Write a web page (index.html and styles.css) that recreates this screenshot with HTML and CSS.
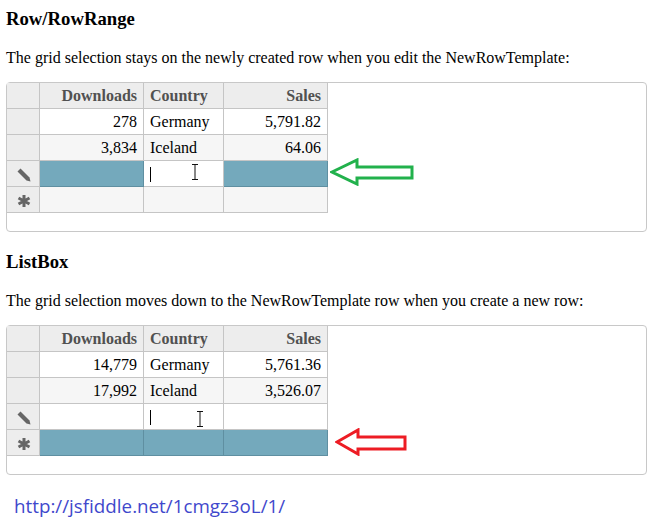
FILE: index.html
```html
<!DOCTYPE html>
<html lang="en">
<head>
  <title>NewRowTemplate selection</title>
  <meta charset="UTF-8">
  <link rel="stylesheet" href="styles.css">
</head>
<body>
  <h3>Row/RowRange</h3>
  <p>The grid selection stays on the newly created row when you edit the NewRowTemplate:</p>
  <div class="grid-box">
    <table class="grid">
      <thead>
        <tr><th class="row-head"></th><th class="num">Downloads</th><th>Country</th><th class="num">Sales</th></tr>
      </thead>
      <tbody>
        <tr><td class="row-head"></td><td class="num">278</td><td>Germany</td><td class="num">5,791.82</td></tr>
        <tr class="alt"><td class="row-head"></td><td class="num">3,834</td><td>Iceland</td><td class="num">64.06</td></tr>
        <tr class="selected">
          <td class="row-head">
            <svg class="glyph" viewBox="0 0 14 14"><path d="M0.5 3.5 L3.5 0.5 L12.5 9.5 L13.5 13.5 L9.5 12.5 Z" fill="#666"/></svg>
          </td>
          <td></td>
          <td class="editing"><span class="caret"></span></td>
          <td></td>
        </tr>
        <tr class="alt">
          <td class="row-head">
            <svg class="glyph" viewBox="0 0 14 14"><path d="M7 1 V13 M1.5 4 L12.5 10 M12.5 4 L1.5 10" stroke="#666" stroke-width="3" fill="none"/></svg>
          </td>
          <td></td><td></td><td></td>
        </tr>
      </tbody>
    </table>
    <svg class="beam beam-top" viewBox="0 0 8 16"><path d="M1 .5 H7 M1 15.5 H7 M4 .5 V15.5" stroke="#111" fill="none"/></svg>
    <svg class="arrow arrow-green" viewBox="0 0 84 28"><path d="M2 14 L27 2 V9 L82 9 V20 L27 20 V26 Z" stroke="#22b14c" stroke-width="3" fill="#fff"/></svg>
  </div>

  <h3 class="second">ListBox</h3>
  <p>The grid selection moves down to the NewRowTemplate row when you create a new row:</p>
  <div class="grid-box">
    <table class="grid">
      <thead>
        <tr><th class="row-head"></th><th class="num">Downloads</th><th>Country</th><th class="num">Sales</th></tr>
      </thead>
      <tbody>
        <tr><td class="row-head"></td><td class="num">14,779</td><td>Germany</td><td class="num">5,761.36</td></tr>
        <tr class="alt"><td class="row-head"></td><td class="num">17,992</td><td>Iceland</td><td class="num">3,526.07</td></tr>
        <tr>
          <td class="row-head">
            <svg class="glyph" viewBox="0 0 14 14"><path d="M0.5 3.5 L3.5 0.5 L12.5 9.5 L13.5 13.5 L9.5 12.5 Z" fill="#666"/></svg>
          </td>
          <td></td>
          <td class="editing"><span class="caret"></span></td>
          <td></td>
        </tr>
        <tr class="selected">
          <td class="row-head">
            <svg class="glyph" viewBox="0 0 14 14"><path d="M7 1 V13 M1.5 4 L12.5 10 M12.5 4 L1.5 10" stroke="#666" stroke-width="3" fill="none"/></svg>
          </td>
          <td></td><td></td><td></td>
        </tr>
      </tbody>
    </table>
    <svg class="beam beam-bottom" viewBox="0 0 8 16"><path d="M1 .5 H7 M1 15.5 H7 M4 .5 V15.5" stroke="#111" fill="none"/></svg>
    <svg class="arrow arrow-red" viewBox="0 0 72 28"><path d="M2 14 L23 2 V9 L70 9 V21 L23 21 V26 Z" stroke="#ed1c24" stroke-width="3" fill="#fff"/></svg>
  </div>

  <a class="fiddle" href="#">http://jsfiddle.net/1cmgz3oL/1/</a>
</body>
</html>
```

FILE: styles.css
```css
body {
  font-family: "Liberation Serif", "Times New Roman", serif;
  font-size: 16px;
  color: #000;
  background: #fff;
  margin: 0;
  padding: 9px 4px 0 6px;
}
h3 {
  margin: 0;
  font-size: 18.72px;
  line-height: 20px;
  font-weight: 700;
}
h3.second {
  margin-top: 20px;
}
p {
  margin: 20px 0 15px;
  font-size: 16px;
  line-height: 18px;
}
.grid-box {
  position: relative;
  height: 148px;
  border: 1px solid #c8c8c8;
  border-radius: 4px;
}
.grid {
  border-collapse: collapse;
  table-layout: fixed;
  width: 320px;
  font-size: 16px;
}
.grid th, .grid td {
  height: 25px;
  padding: 0 6px;
  border: 1px solid #c5c5c5;
  text-align: left;
  overflow: hidden;
}
.grid tr > :first-child {
  border-left: 0;
  width: 32px;
  padding: 0;
}
.grid thead th {
  border-top: 0;
  background: #ededed;
  color: #515151;
  font-weight: 700;
}
.grid .num {
  text-align: right;
}
.grid th:nth-child(2) { width: 91px; }
.grid th:nth-child(3) { width: 67px; }
.grid th:nth-child(4) { width: 91px; }
.grid .row-head {
  background: #ededed;
  text-align: center;
  vertical-align: middle;
}
.alt td {
  background: #f6f6f6;
}
.selected td {
  background: #74a9bc;
  border-color: #5f8fa1;
}
.selected .row-head {
  border-color: #c5c5c5;
}
.grid .selected td.editing, .grid td.editing {
  background: #fff;
  border-color: #c5c5c5;
}
.glyph {
  display: block;
  width: 14px;
  height: 14px;
  margin: 3px 0 0 10px;
}
.caret {
  display: block;
  width: 1px;
  height: 15px;
  margin-top: 2px;
  background: #000;
}
.beam {
  position: absolute;
  width: 8px;
  height: 16px;
}
.beam-top { left: 184px; top: 81px; }
.beam-bottom { left: 189px; top: 85px; }
.arrow {
  position: absolute;
  height: 28px;
}
.arrow-green { left: 323px; top: 75px; width: 84px; }
.arrow-red { left: 328px; top: 102px; width: 72px; }
.fiddle {
  display: block;
  margin: 19px 0 0 8px;
  font-family: "Open Sans", sans-serif;
  font-size: 18.8px;
  line-height: 24px;
  color: #3f48cc;
  text-decoration: none;
}
```
